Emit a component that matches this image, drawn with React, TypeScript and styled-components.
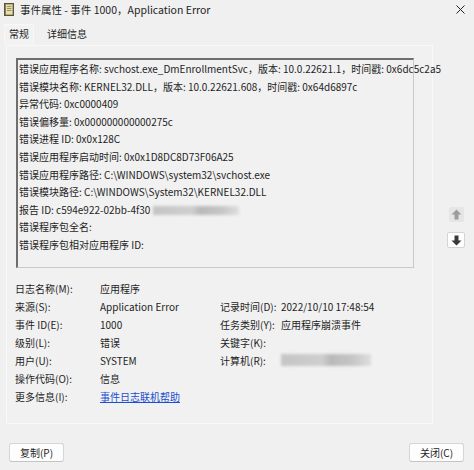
import React from 'react';
import styled, { createGlobalStyle } from 'styled-components';

const GlobalStyle = createGlobalStyle`
  html, body {
    margin: 0;
    padding: 0;
    background: #f0f0f0;
  }
  body {
    font-family: 'Noto Sans CJK SC', 'Noto Sans', sans-serif;
    font-size: 10px;
    color: #1e1e1e;
  }
`;

const Window = styled.div`
  width: 474px;
  height: 470px;
  display: flex;
  flex-direction: column;
  background: #f0f0f0;
  overflow: hidden;
`;

const TitleBar = styled.div`
  height: 18px;
  display: flex;
  align-items: center;
  padding-left: 4px;
  padding-right: 9px;
  gap: 6px;
  font-size: 10.5px;
`;

const TitleText = styled.div`
  flex: 1;
  white-space: nowrap;
`;

const Tabs = styled.div`
  height: 27px;
  display: flex;
  align-items: flex-end;
  padding-left: 4px;
`;

const Tab = styled.div<{ $active?: boolean }>`
  height: 20px;
  line-height: 18px;
  padding: 0 4px;
  margin-right: ${p => (p.$active ? '8px' : '0')};
  border: 1px solid ${p => (p.$active ? '#f7f7f7' : 'transparent')};
  border-bottom: none;
  background: ${p => (p.$active ? '#f2f2f2' : 'transparent')};
`;

const Body = styled.div`
  display: flex;
  height: 379px;
`;

const Panel = styled.div`
  margin-left: 6px;
  width: 427px;
  box-sizing: border-box;
  border: 1px solid #f8f8f8;
  padding: 12px 0 0 9px;
  background: #f1f1f1;
`;

const DescBox = styled.div`
  width: 398px;
  height: 210px;
  box-sizing: border-box;
  border-top: 2px solid #6e6e6e;
  border-left: 2px solid #6e6e6e;
  border-right: 1px solid #c9c9c9;
  border-bottom: 1px solid #c9c9c9;
  padding: 0 0 0 1px;
  background: #f1f1f1;
`;

const DescLine = styled.div`
  height: 17.6px;
  line-height: 17.6px;
  white-space: nowrap;
`;

const Blur = styled.span<{ $w: number; $h?: number }>`
  display: inline-block;
  width: ${p => p.$w}px;
  height: ${p => p.$h ?? 9}px;
  vertical-align: -1px;
  background: linear-gradient(90deg, #c4c4c4 0%, #cfcfcf 45%, #b9b9b9 55%, #c6c6c6 80%, #dedede 100%);
  filter: blur(1.5px);
`;

const Fields = styled.div`
  display: grid;
  grid-template-columns: 85px 120px 61px 1fr;
  grid-auto-rows: 18px;
  align-items: center;
  margin-top: 11px;
  margin-left: -1px;
  white-space: nowrap;
`;

const HelpLink = styled.a`
  color: #1a4fd0;
  text-decoration: underline;
`;

const NavCol = styled.div`
  width: 18px;
  margin-left: 14px;
  padding-top: 162px;
  display: flex;
  flex-direction: column;
  align-items: center;
  gap: 10px;
`;

const NavButton = styled.div<{ $enabled?: boolean }>`
  width: ${p => (p.$enabled ? '18px' : '15px')};
  height: ${p => (p.$enabled ? '16px' : '15px')};
  box-sizing: border-box;
  display: flex;
  align-items: center;
  justify-content: center;
  background: ${p => (p.$enabled ? '#ffffff' : '#e5e5e5')};
  border: 1px solid ${p => (p.$enabled ? '#d4d4d4' : '#e5e5e5')};
  border-radius: 2px;
`;

const Footer = styled.div`
  display: flex;
  justify-content: space-between;
  padding: 19px 10px 0 9px;
`;

const Button = styled.div`
  width: 55px;
  height: 19px;
  box-sizing: border-box;
  display: flex;
  align-items: center;
  justify-content: center;
  background: #fdfdfd;
  border: 1px solid #d6d6d6;
  border-bottom-color: #c4c4c4;
  border-radius: 3px;
`;

const EventIcon = () => (
  <svg width="10" height="13" viewBox="0 0 10 13">
    <rect x="0.5" y="0.5" width="9" height="12" fill="#8a7d5c" stroke="#5c533c" />
    <rect x="2" y="1.5" width="6.5" height="10" fill="#e8dfa8" />
    <rect x="3" y="3" width="4.5" height="1" fill="#9a8f6a" />
    <rect x="3" y="5" width="4.5" height="1" fill="#9a8f6a" />
    <rect x="3" y="7" width="4.5" height="1" fill="#9a8f6a" />
  </svg>
);

const CloseIcon = () => (
  <svg width="9" height="9" viewBox="0 0 9 9">
    <path d="M0.5 0.5 L8.5 8.5 M8.5 0.5 L0.5 8.5" stroke="#222" strokeWidth="1" />
  </svg>
);

const Arrow = ({ up, color }: { up?: boolean; color: string }) => (
  <svg width="11" height="11" viewBox="0 0 11 11" style={up ? undefined : { transform: 'rotate(180deg)' }}>
    <path d="M5.5 0.5 L10.5 5.5 L7.5 5.5 L7.5 10.5 L3.5 10.5 L3.5 5.5 L0.5 5.5 Z" fill={color} />
  </svg>
);

const lines: React.ReactNode[] = [
  '错误应用程序名称: svchost.exe_DmEnrollmentSvc，版本: 10.0.22621.1，时间戳: 0x6dc5c2a5',
  '错误模块名称: KERNEL32.DLL，版本: 10.0.22621.608，时间戳: 0x64d6897c',
  '异常代码: 0xc0000409',
  '错误偏移量: 0x000000000000275c',
  '错误进程 ID: 0x0x128C',
  '错误应用程序启动时间: 0x0x1D8DC8D73F06A25',
  '错误应用程序路径: C:\\WINDOWS\\system32\\svchost.exe',
  '错误模块路径: C:\\WINDOWS\\System32\\KERNEL32.DLL',
  <>
    报告 ID: c594e922-02bb-4f30 <Blur $w={86} />
  </>,
  '错误程序包全名:',
  '错误程序包相对应用程序 ID:',
];

export default function App() {
  return (
    <Window>
      <GlobalStyle />
      <TitleBar>
        <EventIcon />
        <TitleText>事件属性 - 事件 1000，Application Error</TitleText>
        <CloseIcon />
      </TitleBar>
      <Tabs>
        <Tab $active>常规</Tab>
        <Tab>详细信息</Tab>
      </Tabs>
      <Body>
        <Panel>
          <DescBox>
            {lines.map((l, i) => (
              <DescLine key={i}>{l}</DescLine>
            ))}
          </DescBox>
          <Fields>
            <span>日志名称(M):</span>
            <span>应用程序</span>
            <span />
            <span />

            <span>来源(S):</span>
            <span>Application Error</span>
            <span>记录时间(D):</span>
            <span>2022/10/10 17:48:54</span>

            <span>事件 ID(E):</span>
            <span>1000</span>
            <span>任务类别(Y):</span>
            <span>应用程序崩溃事件</span>

            <span>级别(L):</span>
            <span>错误</span>
            <span>关键字(K):</span>
            <span />

            <span>用户(U):</span>
            <span>SYSTEM</span>
            <span>计算机(R):</span>
            <span>
              <Blur $w={90} $h={12} />
            </span>

            <span>操作代码(O):</span>
            <span>信息</span>
            <span />
            <span />

            <span>更多信息(I):</span>
            <span>
              <HelpLink>事件日志联机帮助</HelpLink>
            </span>
            <span />
            <span />
          </Fields>
        </Panel>
        <NavCol>
          <NavButton>
            <Arrow up color="#9c9c9c" />
          </NavButton>
          <NavButton $enabled>
            <Arrow color="#3a3a3a" />
          </NavButton>
        </NavCol>
      </Body>
      <Footer>
        <Button>复制(P)</Button>
        <Button>关闭(C)</Button>
      </Footer>
    </Window>
  );
}
